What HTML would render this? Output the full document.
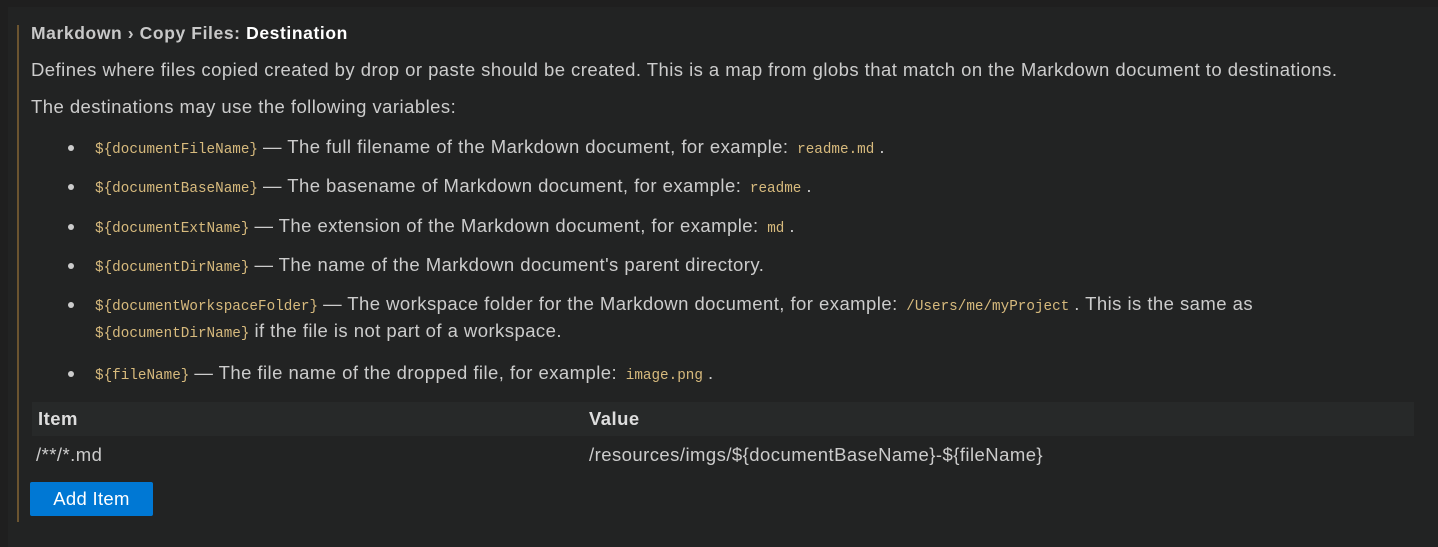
<!DOCTYPE html>
<html><head><style>
body{margin:0;width:1438px;height:547px;background:#1f1f1f;overflow:hidden;font-family:"Liberation Sans",sans-serif;color:#cccccc;}
.main{position:absolute;left:8px;top:7px;right:0;bottom:0;background:#222323;}
.bar{position:absolute;left:17px;top:25px;width:2px;height:497px;background:#6b5430;}
.t,.li{position:absolute;white-space:nowrap;font-size:18.5px;letter-spacing:0.45px;}
.t{left:31px}
.title{top:23px;font-weight:bold;color:#c8c8c8;font-size:17.5px;letter-spacing:0.6px}
.title b{color:#fff}
code{font-family:"Liberation Mono",monospace;font-size:14.3px;letter-spacing:0;color:#d7ba7d;margin:0 5px 0 3px;}
.li{left:95px}
.dot{position:absolute;left:68px;width:6px;height:6px;border-radius:50%;background:#ccc;}
.th{position:absolute;left:32px;top:402px;width:1382px;height:34px;background:#272929;}
.btn{position:absolute;left:30px;top:482px;width:123px;height:34px;background:#0078d4;border-radius:2px;color:#fff;font-size:18.5px;letter-spacing:0.3px;text-align:center;line-height:34px;}
</style></head><body>
<div class="main"></div>
<div class="bar"></div>
<div class="t title">Markdown › Copy Files: <b>Destination</b></div>
<div class="t" style="top:59px">Defines where files copied created by drop or paste should be created. This is a map from globs that match on the Markdown document to destinations.</div>
<div class="t" style="top:96px">The destinations may use the following variables:</div>
<div class="dot" style="top:145px"></div><div class="li" style="top:136px"><code style="margin-left:0">${documentFileName}</code>— The full filename of the Markdown document, for example: <code>readme.md</code>.</div>
<div class="dot" style="top:184px"></div><div class="li" style="top:175px"><code style="margin-left:0">${documentBaseName}</code>— The basename of Markdown document, for example: <code>readme</code>.</div>
<div class="dot" style="top:224px"></div><div class="li" style="top:215px"><code style="margin-left:0">${documentExtName}</code>— The extension of the Markdown document, for example: <code>md</code>.</div>
<div class="dot" style="top:263px"></div><div class="li" style="top:254px"><code style="margin-left:0">${documentDirName}</code>— The name of the Markdown document's parent directory.</div>
<div class="dot" style="top:302px"></div><div class="li" style="top:293px"><code style="margin-left:0">${documentWorkspaceFolder}</code>— The workspace folder for the Markdown document, for example: <code>/Users/me/myProject</code>. This is the same as</div>
<div class="li" style="top:320px"><code style="margin-left:0">${documentDirName}</code>if the file is not part of a workspace.</div>
<div class="dot" style="top:371px"></div><div class="li" style="top:362px"><code style="margin-left:0">${fileName}</code>— The file name of the dropped file, for example: <code>image.png</code>.</div>
<div class="th"></div>
<div class="t" style="top:408px;left:38px;font-weight:bold;color:#ddd">Item</div>
<div class="t" style="top:408px;left:589px;font-weight:bold;color:#ddd">Value</div>
<div class="t" style="top:444px;left:36px">/**/*.md</div>
<div class="t" style="top:444px;left:589px">/resources/imgs/${documentBaseName}-${fileName}</div>
<div class="btn">Add Item</div>
</body></html>
